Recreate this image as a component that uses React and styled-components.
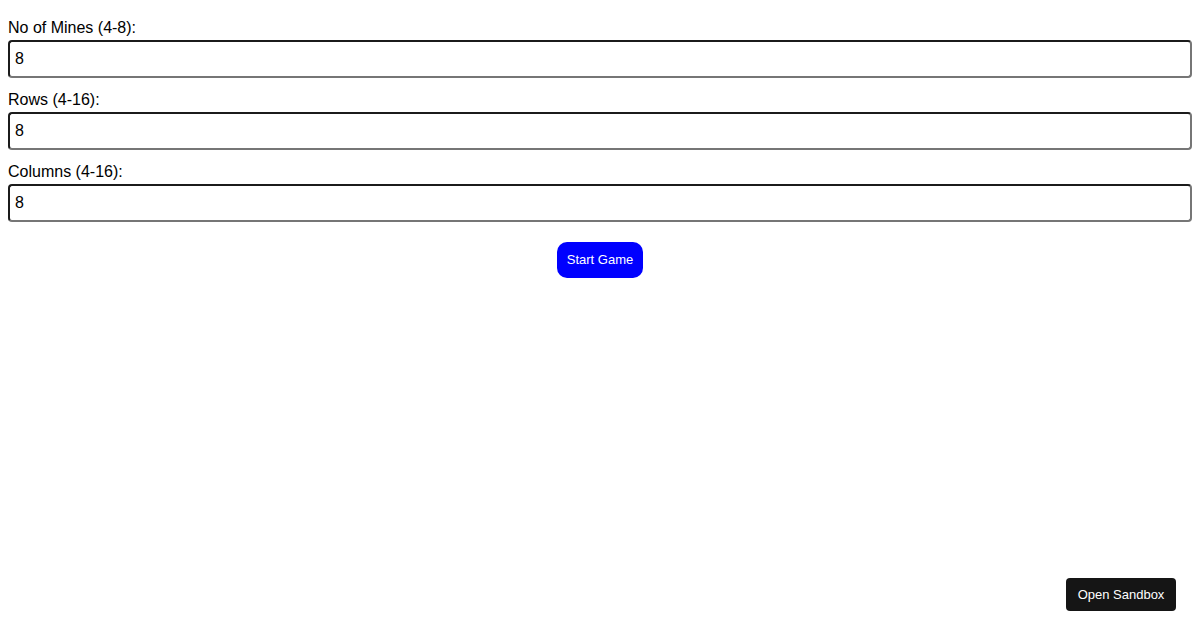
import React, { useState } from "react";
import styled, { createGlobalStyle } from "styled-components";

const GlobalStyle = createGlobalStyle`
  html, body { margin: 0; padding: 0; background: #fff; }
  body {
    margin: 8px;
    font-family: "Liberation Sans", Arial, sans-serif;
    color: #000;
  }
`;

const Page = styled.div`
  display: flex;
  flex-direction: column;
  padding-top: 10px;
`;

const Field = styled.div`
  display: flex;
  flex-direction: column;
  gap: 3px;
  margin-bottom: 12px;
`;

const Label = styled.label`
  font-size: 16px;
  line-height: 18px;
  padding-top: 1px;
`;

const Input = styled.input`
  box-sizing: border-box;
  width: 100%;
  height: 38px;
  padding: 8px 5px;
  font-family: "Liberation Sans", Arial, sans-serif;
  font-size: 16px;
  color: #000;
  background: #fff;
  border: 2px solid;
  border-color: #1b1b1b #767676 #767676 #1b1b1b;
  border-radius: 4px;
  outline: none;
`;

const Actions = styled.div`
  display: flex;
  justify-content: center;
  margin-top: 8px;
`;

const StartButton = styled.button`
  height: 36px;
  padding: 0 10px 2px;
  border: none;
  border-radius: 10px;
  background: #0000ff;
  color: #fff;
  font-family: "Liberation Sans", Arial, sans-serif;
  font-size: 13px;
  cursor: pointer;
`;

const SandboxButton = styled.button`
  position: fixed;
  right: 24px;
  bottom: 19px;
  height: 33px;
  width: 110px;
  padding: 0;
  border: none;
  border-radius: 4px;
  background: #151515;
  color: #fff;
  font-family: "Liberation Sans", Arial, sans-serif;
  font-size: 13px;
  cursor: pointer;
`;

export default function App() {
  const [mines, setMines] = useState("8");
  const [rows, setRows] = useState("8");
  const [cols, setCols] = useState("8");
  return (
    <>
      <GlobalStyle />
      <Page>
        <Field>
          <Label>No of Mines (4-8):</Label>
          <Input value={mines} onChange={(e) => setMines(e.target.value)} />
        </Field>
        <Field>
          <Label>Rows (4-16):</Label>
          <Input value={rows} onChange={(e) => setRows(e.target.value)} />
        </Field>
        <Field>
          <Label>Columns (4-16):</Label>
          <Input value={cols} onChange={(e) => setCols(e.target.value)} />
        </Field>
        <Actions>
          <StartButton>Start Game</StartButton>
        </Actions>
      </Page>
      <SandboxButton>Open Sandbox</SandboxButton>
    </>
  );
}
